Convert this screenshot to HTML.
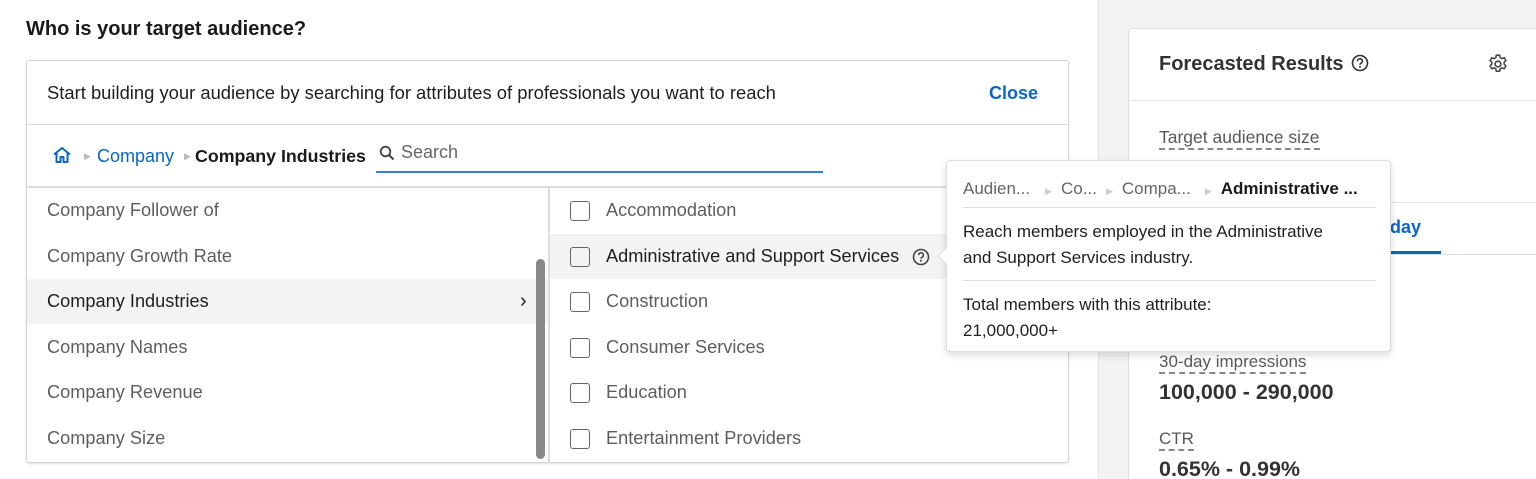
<!DOCTYPE html>
<html><head><meta charset="utf-8"><style>
*{box-sizing:border-box;margin:0;padding:0}
html,body{width:1536px;height:479px;overflow:hidden}
body{background:#fff;font-family:"Liberation Sans",sans-serif;position:relative;color:#1a1a1a}
.abs{position:absolute}
.gray{left:1098px;top:0;width:438px;height:479px;background:#f3f3f3;border-left:1px solid #e2e2e2}
.card{left:1128px;top:28px;width:420px;height:470px;background:#fff;border:1px solid #ddd;border-radius:4px}
.box{left:26px;top:60px;width:1043px;height:403px;border:1px solid #d6d6d6;border-radius:3px;box-shadow:0 1px 2px rgba(0,0,0,.12)}
.row{position:absolute;left:0;height:45px;line-height:45px;font-size:18.2px;color:#5e5e5e;padding-left:20px}
.cb{position:absolute;left:20px;top:13px;width:20px;height:20px;border:1.5px solid #666;border-radius:3px}
.rrow{position:absolute;left:0;width:520px;height:45px;line-height:45px;font-size:18.2px;color:#5e5e5e;padding-left:56px}
.lbl{color:#595959;border-bottom:2px dashed #888;padding-bottom:1px}
.val{font-size:21.5px;font-weight:bold;color:#333}
</style></head><body>
<div class="abs" style="left:26px;top:18px;font-size:20px;font-weight:bold;color:#1a1a1a">Who is your target audience?</div>
<div class="abs gray"></div>
<div class="abs card">
  <div class="abs" style="left:30px;top:24px;font-size:20px;font-weight:bold;color:#333">Forecasted Results
    <svg width="18" height="18" viewBox="0 0 18 18" style="vertical-align:-2px;margin-left:2px"><circle cx="9" cy="9" r="7.5" fill="none" stroke="#333" stroke-width="1.6"/><path d="M6.6 7.2a2.4 2.4 0 1 1 3.2 2.2c-.6.3-.8.6-.8 1.3" fill="none" stroke="#333" stroke-width="1.6"/><circle cx="9" cy="12.8" r="1" fill="#333"/></svg></div>
  <svg class="abs" style="left:358px;top:24px" width="22" height="22" viewBox="0 0 20 20"><circle cx="10" cy="10" r="2.6" fill="none" stroke="#444" stroke-width="1.5"/><path d="M8.5 2h3l.5 2.2 1.6.9 2.1-.8 1.5 2.6-1.6 1.5v1.8l1.6 1.5-1.5 2.6-2.1-.8-1.6.9-.5 2.2h-3l-.5-2.2-1.6-.9-2.1.8-1.5-2.6 1.6-1.5V8.4L2.8 6.9l1.5-2.6 2.1.8 1.6-.9z" fill="none" stroke="#444" stroke-width="1.4" stroke-linejoin="round"/></svg>
  <div class="abs" style="left:0;top:71px;width:420px;border-top:1px solid #e0e0e0"></div>
  <div class="abs" style="left:30px;top:98px;font-size:17.5px"><span class="lbl">Target audience size</span></div>
  <div class="abs" style="left:0;top:173px;width:420px;border-top:1px solid #e0e0e0"></div>
  <div class="abs" style="left:255px;top:188px;font-size:18px;font-weight:bold;color:#0a66c2">-day</div>
  <div class="abs" style="left:240px;top:222px;width:72px;border-top:3px solid #0a66c2"></div>
  <div class="abs" style="left:0;top:225px;width:420px;border-top:1px solid #e0e0e0"></div>
  <div class="abs" style="left:30px;top:323px;font-size:17px"><span class="lbl">30-day impressions</span></div>
  <div class="abs val" style="left:30px;top:351px">100,000 - 290,000</div>
  <div class="abs" style="left:30px;top:400px;font-size:17px"><span class="lbl">CTR</span></div>
  <div class="abs val" style="left:30px;top:428px">0.65% - 0.99%</div>
</div>
<div class="abs box" style="background:#fff">
  <div class="abs" style="left:20px;top:21px;font-size:18.4px;color:#1f1f1f;white-space:nowrap">Start building your audience by searching for attributes of professionals you want to reach</div>
  <div class="abs" style="left:962px;top:22px;font-size:18px;font-weight:bold;color:#0a66c2">Close</div>
  <div class="abs" style="left:0;top:63px;width:1041px;border-top:1px solid #ddd"></div>
  <svg class="abs" style="left:25px;top:85px" width="20" height="18" viewBox="0 0 20 18"><path d="M2 8.5L10 2l8 6.5M4.5 7v9h4v-5h3v5h4V7" fill="none" stroke="#0a66c2" stroke-width="2" stroke-linejoin="round"/></svg>
  <div class="abs" style="left:57px;top:90px;color:#bbb;font-size:9px">▶</div>
  <div class="abs" style="left:70px;top:85px;font-size:18px;color:#0a66c2">Company</div>
  <div class="abs" style="left:157px;top:90px;color:#bbb;font-size:9px">▶</div>
  <div class="abs" style="left:168px;top:85px;font-size:17.8px;font-weight:bold;color:#1a1a1a">Company Industries</div>
  <svg class="abs" style="left:352px;top:84px" width="16" height="16" viewBox="0 0 16 16"><circle cx="6.5" cy="6.5" r="4.8" fill="none" stroke="#444" stroke-width="1.8"/><path d="M10 10l4.5 4.5" stroke="#444" stroke-width="2"/></svg>
  <div class="abs" style="left:374px;top:81px;font-size:18px;color:#666">Search</div>
  <div class="abs" style="left:349px;top:110px;width:447px;border-top:2px solid #3d7fc7"></div>
  <div class="abs" style="left:0;top:125px;width:1041px;border-top:2px solid #ddd"></div>
  <div class="abs" style="left:521px;top:127px;height:275px;border-left:2px solid #ddd"></div>
  <div class="row" style="top:127px">Company Follower of</div>
  <div class="row" style="top:173px">Company Growth Rate</div>
  <div class="row" style="top:218px;width:521px;background:#f3f3f3;color:#1f1f1f">Company Industries<span style="position:absolute;left:493px;font-size:20px">›</span></div>
  <div class="row" style="top:264px">Company Names</div>
  <div class="row" style="top:309px">Company Revenue</div>
  <div class="row" style="top:355px">Company Size</div>
  <div class="abs" style="left:509px;top:198px;width:9px;height:200px;background:#888;border-radius:5px"></div>
  <div class="abs" style="left:523px;top:127px">
    <div class="rrow" style="top:0"><div class="cb"></div>Accommodation</div>
    <div class="rrow" style="top:46px;background:#f3f3f3;color:#1f1f1f"><div class="cb"></div>Administrative and Support Services
      <svg style="position:absolute;left:362px;top:14px" width="18" height="18" viewBox="0 0 18 18"><circle cx="9" cy="9" r="7.5" fill="none" stroke="#444" stroke-width="1.6"/><path d="M6.6 7.2a2.4 2.4 0 1 1 3.2 2.2c-.6.3-.8.6-.8 1.3" fill="none" stroke="#444" stroke-width="1.6"/><circle cx="9" cy="12.8" r="1" fill="#444"/></svg></div>
    <div class="rrow" style="top:91px"><div class="cb"></div>Construction</div>
    <div class="rrow" style="top:137px"><div class="cb"></div>Consumer Services</div>
    <div class="rrow" style="top:182px"><div class="cb"></div>Education</div>
    <div class="rrow" style="top:228px"><div class="cb"></div>Entertainment Providers</div>
  </div>
</div>
<div class="abs" style="left:946px;top:160px;width:445px;height:192px;background:#fff;border:1px solid #ddd;border-radius:4px;box-shadow:0 3px 8px rgba(0,0,0,.15)">
  <div class="abs" style="left:-7px;top:89px;width:12px;height:12px;background:#fff;border-left:1px solid #ddd;border-bottom:1px solid #ddd;transform:rotate(45deg)"></div>
  <div class="abs" style="left:16px;top:18px;font-size:17px;color:#666;white-space:nowrap">Audien...<span style="color:#ccc;font-size:9px;margin:0 9px 0 15px">▶</span>Co...<span style="color:#ccc;font-size:9px;margin:0 9px 0 9px">▶</span>Compa...<span style="color:#ccc;font-size:9px;margin:0 9px 0 14px">▶</span><b style="color:#1a1a1a">Administrative ...</b></div>
  <div class="abs" style="left:16px;top:46px;width:413px;border-top:1px solid #ddd"></div>
  <div class="abs" style="left:16px;top:58px;font-size:17px;line-height:26px;color:#1f1f1f;white-space:nowrap">Reach members employed in the Administrative<br>and Support Services industry.</div>
  <div class="abs" style="left:16px;top:119px;width:413px;border-top:1px solid #ddd"></div>
  <div class="abs" style="left:16px;top:131px;font-size:17px;line-height:26px;color:#1f1f1f">Total members with this attribute:<br>21,000,000+</div>
</div>
</body></html>
